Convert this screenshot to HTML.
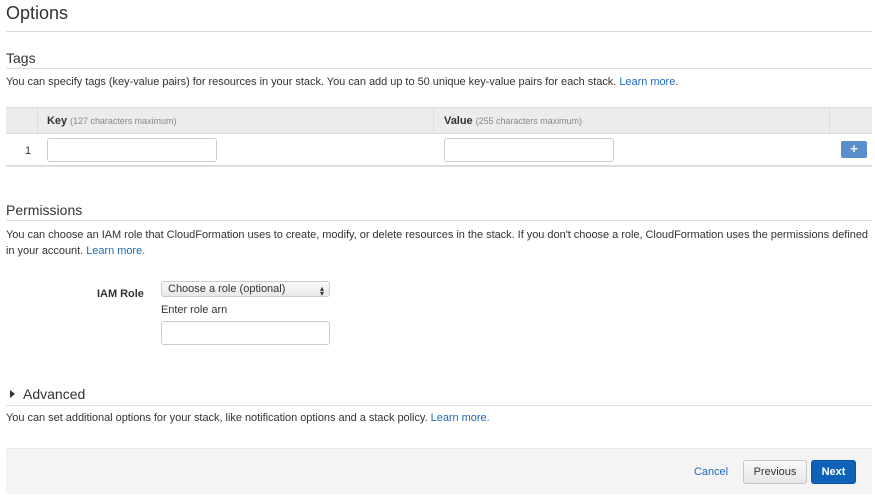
<!DOCTYPE html>
<html><head><meta charset="utf-8"><style>
*{margin:0;padding:0;box-sizing:border-box}
body{width:875px;height:498px;background:#fff;font-family:"Liberation Sans",Arial,sans-serif;color:#333;position:relative;overflow:hidden}
.a{position:absolute;white-space:nowrap}
.t{font-size:11px;color:#333;letter-spacing:-0.03px}
a{color:#1f6bb5;text-decoration:none}
.line{position:absolute;left:6px;width:866px;height:1px;background:#ddd}
.inp{position:absolute;border:1px solid #ccc;border-radius:3px;background:#fff}
</style></head><body>
<div class="a" style="left:6px;top:3px;font-size:18px;color:#333">Options</div>
<div class="line" style="top:31px"></div>
<div class="a" style="left:6px;top:50px;font-size:14px">Tags</div>
<div class="line" style="top:68px"></div>
<div class="a t" style="left:6px;top:76px">You can specify tags (key-value pairs) for resources in your stack. You can add up to 50 unique key-value pairs for each stack. <a>Learn more.</a></div>

<div class="a" style="left:6px;top:107px;width:866px;height:27px;background:#ececec;border-top:1px solid #ddd;border-bottom:1px solid #ddd"></div>
<div class="a" style="left:37px;top:107px;width:1px;height:27px;background:#ddd"></div>
<div class="a" style="left:433px;top:107px;width:1px;height:27px;background:#ddd"></div>
<div class="a" style="left:829px;top:107px;width:1px;height:27px;background:#ddd"></div>
<div class="a t" style="left:47px;top:115px"><b>Key</b> <span style="color:#888;font-size:9px">(127 characters maximum)</span></div>
<div class="a t" style="left:444px;top:115px"><b>Value</b> <span style="color:#888;font-size:9px">(255 characters maximum)</span></div>
<div class="a t" style="left:25px;top:145px">1</div>
<div class="inp" style="left:47px;top:138px;width:170px;height:24px"></div>
<div class="inp" style="left:444px;top:138px;width:170px;height:24px"></div>
<div class="a" style="left:841px;top:141px;width:26px;height:17px;background:#5a8fcc;border-radius:2px;color:#fff;font-size:13px;font-weight:bold;text-align:center;line-height:16px">+</div>
<div class="a" style="left:6px;top:165px;width:866px;height:2px;background:#ddd"></div>

<div class="a" style="left:6px;top:202px;font-size:14px">Permissions</div>
<div class="line" style="top:220px"></div>
<div class="a t" style="left:6px;top:229px">You can choose an IAM role that CloudFormation uses to create, modify, or delete resources in the stack. If you don't choose a role, CloudFormation uses the permissions defined</div>
<div class="a t" style="left:6px;top:245px">in your account. <a>Learn more.</a></div>
<div class="a t" style="left:97px;top:288px;font-weight:bold">IAM Role</div>
<div class="a" style="left:161px;top:281px;width:169px;height:16px;border:1px solid #ccc;border-radius:3px;background:linear-gradient(#fafafa,#e8e8e8);font-size:11px;padding-left:6px;line-height:14px">Choose a role (optional)<span style="position:absolute;right:5px;top:0;font-size:8px">&#x25B4;<br></span><span style="position:absolute;right:5px;top:5px;font-size:8px">&#x25BE;</span></div>
<div class="a t" style="left:161px;top:304px">Enter role arn</div>
<div class="inp" style="left:161px;top:321px;width:169px;height:24px"></div>

<div class="a" style="left:10px;top:390px;width:0;height:0;border-top:4px solid transparent;border-bottom:4px solid transparent;border-left:5px solid #333"></div>
<div class="a" style="left:23px;top:386px;font-size:14px">Advanced</div>
<div class="line" style="top:405px"></div>
<div class="a t" style="left:6px;top:412px">You can set additional options for your stack, like notification options and a stack policy. <a>Learn more.</a></div>

<div class="a" style="left:6px;top:448px;width:866px;height:46px;background:#f4f4f4;border-top:1px solid #e6e6e6"></div>
<div class="a t" style="left:694px;top:466px"><a>Cancel</a></div>
<div class="a" style="left:743px;top:460px;width:64px;height:24px;border:1px solid #c6c6c6;border-radius:3px;background:linear-gradient(#fafafa,#e6e6e6);font-size:11px;text-align:center;line-height:22px">Previous</div>
<div class="a" style="left:811px;top:460px;width:45px;height:24px;border-radius:3px;background:#0d62b8;border:1px solid #0a54a0;color:#fff;font-size:11px;font-weight:bold;text-align:center;line-height:22px">Next</div>
</body></html>
